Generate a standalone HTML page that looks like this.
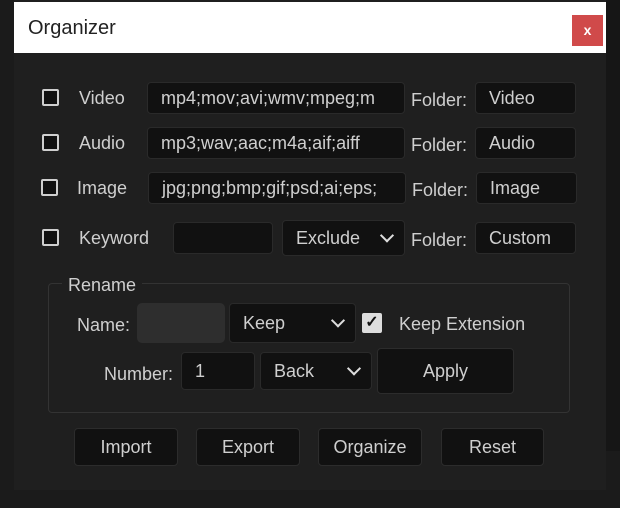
<!DOCTYPE html>
<html><head><style>
body{margin:0;width:620px;height:508px;background:#1b1b1b;font-family:"Liberation Sans",sans-serif;color:#cfcfcf;position:relative;overflow:hidden}
.a{position:absolute;box-sizing:border-box}
.panel{left:14px;top:0;width:592px;height:490px;background:#1f1f1f}
.title{left:14px;top:2px;width:592px;height:51px;background:#fff;color:#222;font-size:20px;padding:15px 0 0 14px}
.close{left:572px;top:15px;width:31px;height:31px;background:#d04a4a;color:#fff;font-size:14px;font-weight:bold;text-align:center;line-height:31px}
.cb{width:17px;height:17px;border:2px solid #cfcfcf;border-radius:2px;background:#111}
.inp{background:#111;border:1px solid #2a2a2a;border-radius:4px;font-size:18px;padding-left:13px;line-height:30px;white-space:nowrap;overflow:hidden;color:#cfcfcf}
.lbl{font-size:18px;line-height:20px}
.btn{background:#111;border:1px solid #2c2c2c;border-radius:4px;font-size:18px;text-align:center}
.chev{position:absolute;right:12px;top:50%;width:8px;height:8px;border-right:2.5px solid #ddd;border-bottom:2.5px solid #ddd;transform:translateY(-75%) rotate(45deg)}
</style></head><body>
<div class="a panel"></div>
<div class="a" style="left:606px;top:0;width:14px;height:451px;background:#161616"></div>
<div class="a title">Organizer</div>
<div class="a close">x</div>

<div class="a cb" style="left:42px;top:89px"></div><div class="a lbl" style="left:79px;top:88px">Video</div>
<div class="a inp" style="left:147px;top:82px;width:258px;height:32px">mp4;mov;avi;wmv;mpeg;m</div>
<div class="a lbl" style="left:411px;top:90px">Folder:</div>
<div class="a inp" style="left:475px;top:82px;width:101px;height:32px">Video</div>

<div class="a cb" style="left:42px;top:134px"></div><div class="a lbl" style="left:79px;top:133px">Audio</div>
<div class="a inp" style="left:147px;top:127px;width:258px;height:32px">mp3;wav;aac;m4a;aif;aiff</div>
<div class="a lbl" style="left:411px;top:135px">Folder:</div>
<div class="a inp" style="left:475px;top:127px;width:101px;height:32px">Audio</div>

<div class="a cb" style="left:41px;top:179px"></div><div class="a lbl" style="left:77px;top:178px">Image</div>
<div class="a inp" style="left:148px;top:172px;width:258px;height:32px">jpg;png;bmp;gif;psd;ai;eps;</div>
<div class="a lbl" style="left:412px;top:180px">Folder:</div>
<div class="a inp" style="left:476px;top:172px;width:101px;height:32px">Image</div>

<div class="a cb" style="left:42px;top:229px"></div><div class="a lbl" style="left:79px;top:228px">Keyword</div>
<div class="a inp" style="left:173px;top:222px;width:100px;height:32px"></div>
<div class="a inp" style="left:282px;top:220px;width:123px;height:36px;line-height:34px">Exclude<span class="chev"></span></div>
<div class="a lbl" style="left:411px;top:230px">Folder:</div>
<div class="a inp" style="left:475px;top:222px;width:101px;height:32px">Custom</div>

<div class="a" style="left:48px;top:283px;width:522px;height:130px;border:1px solid #333;border-radius:4px"></div>
<div class="a lbl" style="left:62px;top:275px;background:#1f1f1f;padding:0 6px">Rename</div>
<div class="a lbl" style="left:77px;top:315px">Name:</div>
<div class="a" style="left:137px;top:303px;width:88px;height:40px;background:#2e2e2e;border-radius:5px"></div>
<div class="a inp" style="left:229px;top:303px;width:127px;height:40px;line-height:38px">Keep<span class="chev"></span></div>
<div class="a" style="left:362px;top:313px;width:20px;height:20px;background:#ddd;border-radius:2px;color:#111;font-size:16px;text-align:center;line-height:20px;font-weight:bold">✓</div>
<div class="a lbl" style="left:399px;top:314px">Keep Extension</div>
<div class="a lbl" style="left:104px;top:364px">Number:</div>
<div class="a inp" style="left:181px;top:352px;width:74px;height:38px;line-height:36px">1</div>
<div class="a inp" style="left:260px;top:352px;width:112px;height:38px;line-height:36px">Back<span class="chev"></span></div>
<div class="a btn" style="left:377px;top:348px;width:137px;height:46px;line-height:44px">Apply</div>

<div class="a btn" style="left:74px;top:428px;width:104px;height:38px;line-height:36px">Import</div>
<div class="a btn" style="left:196px;top:428px;width:104px;height:38px;line-height:36px">Export</div>
<div class="a btn" style="left:318px;top:428px;width:104px;height:38px;line-height:36px">Organize</div>
<div class="a btn" style="left:441px;top:428px;width:103px;height:38px;line-height:36px">Reset</div>
</body></html>
